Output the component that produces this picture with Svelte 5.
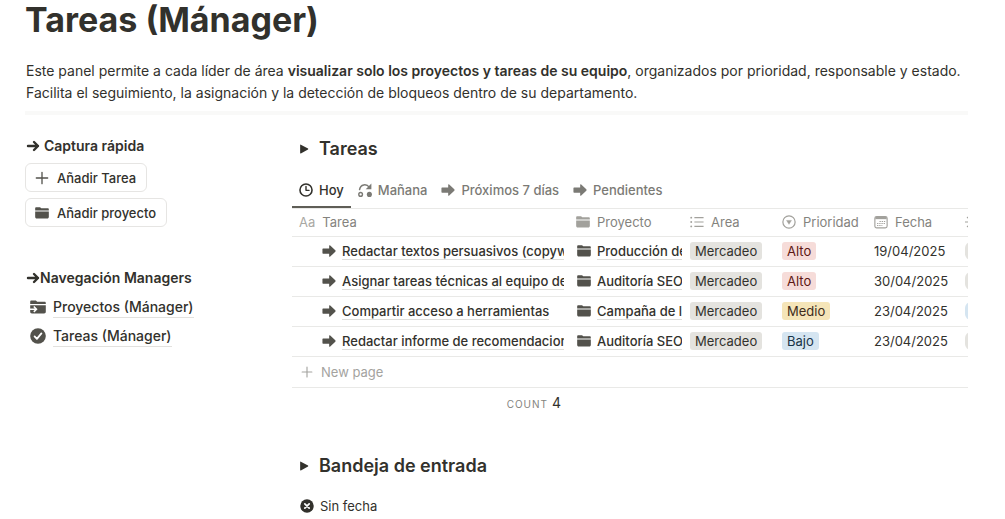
<script>
  const tabs = [
    { label: 'Hoy', icon: 'clock' },
    { label: 'Mañana', icon: 'skip' },
    { label: 'Próximos 7 días', icon: 'arrow' },
    { label: 'Pendientes', icon: 'arrow' }
  ];
  let active = $state(0);

  const rows = [
    { task: 'Redactar textos persuasivos (copywriting)', project: 'Producción de contenido', area: 'Mercadeo', priority: 'Alto', tone: 'red', date: '19/04/2025', state: 'gray' },
    { task: 'Asignar tareas técnicas al equipo de desarrollo', project: 'Auditoría SEO técnica', area: 'Mercadeo', priority: 'Alto', tone: 'red', date: '30/04/2025', state: 'gray' },
    { task: 'Compartir acceso a herramientas', project: 'Campaña de lanzamiento', area: 'Mercadeo', priority: 'Medio', tone: 'yellow', date: '23/04/2025', state: 'blue' },
    { task: 'Redactar informe de recomendaciones', project: 'Auditoría SEO técnica', area: 'Mercadeo', priority: 'Bajo', tone: 'blue', date: '23/04/2025', state: 'gray' }
  ];
</script>

{#snippet icon(name)}
  <svg class="icon" viewBox="0 0 16 16" fill="currentColor" aria-hidden="true">
    {#if name === 'arrow'}
      <path d="M1.200 5h7V2c0-.7.7-.9 1.200-.4l5.800 5.600c.5.5.5 1.100 0 1.600l-5.800 5.600c-.5.5-1.200.3-1.200-.4v-3h-7c-.4 0-.7-.3-.7-.7V5.700c0-.4.3-.7.7-.7z" />
    {:else if name === 'folder'}
      <path d="M.2 2.700c0-.7.500-1.200 1.200-1.200h3.900c.5 0 .8.100 1.100.4l.8.800h7.400c.7 0 1.200.500 1.200 1.200v1.100H.2z" />
      <path d="M.2 6.200h15.600v6.500c0 1-.7 1.700-1.700 1.700H1.900c-1 0-1.700-.7-1.700-1.700z" />
    {:else if name === 'folder-arrow'}
      <path d="M.2 2.700c0-.7.500-1.200 1.200-1.200h3.900c.5 0 .8.100 1.100.4l.8.800h7.400c.7 0 1.200.500 1.200 1.200v1.100H.2z" />
      <path d="M.2 6.200h15.600v6.500c0 1-.7 1.700-1.700 1.700H1.900c-1 0-1.700-.7-1.700-1.700z" />
      <path d="M0 10.200h6M3.800 7.500l2.700 2.700-2.700 2.700" fill="none" stroke="#fff" stroke-width="1.500" />
    {:else if name === 'plus'}
      <path d="M8 1.500v13M1.500 8h13" fill="none" stroke="currentColor" stroke-width="1.500" stroke-linecap="round" />
    {:else if name === 'check'}
      <circle cx="8" cy="8" r="7.800" />
      <path d="m4.600 8.400 2.300 2.400 4.500-5.400" fill="none" stroke="#fff" stroke-width="1.800" stroke-linecap="round" stroke-linejoin="round" />
    {:else if name === 'cross'}
      <circle cx="8" cy="8" r="7.700" />
      <path d="m5.500 5.500 5 5m0-5-5 5" fill="none" stroke="#fff" stroke-width="2" stroke-linecap="round" />
    {:else if name === 'clock'}
      <circle cx="8" cy="8" r="6.900" fill="none" stroke="currentColor" stroke-width="1.800" />
      <path d="M8 3.900v4.500h3.500" fill="none" stroke="currentColor" stroke-width="1.600" stroke-linecap="round" stroke-linejoin="round" />
    {:else if name === 'skip'}
      <circle cx="3" cy="13" r="2.100" fill="none" stroke="currentColor" stroke-width="1.600" />
      <circle cx="13" cy="13" r="2.900" />
      <path d="M1.800 7.500C2.800 1.400 9.700.4 13 5" fill="none" stroke="currentColor" stroke-width="1.700" stroke-linecap="round" />
      <path d="M15.300.7v6.500H8.800z" />
    {:else if name === 'list'}
      <circle cx="1.400" cy="3" r="1.100" /><circle cx="1.400" cy="8" r="1.100" /><circle cx="1.400" cy="13" r="1.100" />
      <path d="M5 3h10.500M5 8h10.500M5 13h10.500" fill="none" stroke="currentColor" stroke-width="1.300" />
    {:else if name === 'select'}
      <circle cx="8" cy="8" r="7" fill="none" stroke="currentColor" stroke-width="1.400" />
      <path d="M5.200 6.200h5.600L8 10.700z" stroke="currentColor" stroke-width=".5" stroke-linejoin="round" />
    {:else if name === 'calendar'}
      <rect x="1" y="1.700" width="14" height="13" rx="2" fill="none" stroke="currentColor" stroke-width="1.300" />
      <path d="M1.500 3.500h13" stroke="currentColor" stroke-width="2.500" />
      <path d="M6.300 7.500h6.500M3.500 9.700h9.300M3.500 12h6" stroke="currentColor" stroke-width="1.200" stroke-dasharray="1.500 1" />
    {:else if name === 'status'}
      <path d="M8 0v4M8 12v4M0 8h4M12 8h4M2.300 2.300l2.800 2.800M10.900 10.900l2.800 2.800M2.300 13.700l2.800-2.800M10.900 5.100l2.800-2.800" fill="none" stroke="currentColor" stroke-width="1.300" />
    {:else if name === 'toggle'}
      <path d="M3.600 3.500v9c0 .5.400.7.800.5l8.200-4.500c.4-.2.400-.8 0-1L4.400 3c-.4-.2-.8 0-.8.500z" />
    {/if}
  </svg>
{/snippet}

<main>
  <h1>Tareas (Mánager)</h1>
  <p class="intro">
    Este panel permite a cada líder de área <strong>visualizar solo los proyectos y tareas de su equipo</strong>, organizados por prioridad, responsable y estado. Facilita el seguimiento, la asignación y la detección de bloqueos dentro de su departamento.
  </p>
  <div class="rule"></div>

  <div class="columns">
    <aside>
      <section class="capture">
        <h3>
          <svg class="lead" viewBox="0 0 14 12" aria-hidden="true"><path d="M2 6h10M8 2l4 4-4 4" /></svg>
          Captura rápida
        </h3>
        <button class="action">{@render icon('plus')}Añadir Tarea</button>
        <button class="action">{@render icon('folder')}Añadir proyecto</button>
      </section>
      <nav>
        <h3 class="tight">
          <svg class="lead" viewBox="0 0 14 12" aria-hidden="true"><path d="M2 6h10M8 2l4 4-4 4" /></svg>
          Navegación Managers
        </h3>
        <a class="page" href="#proyectos">{@render icon('folder-arrow')}<span>Proyectos (Mánager)</span></a>
        <a class="page" href="#tareas">{@render icon('check')}<span>Tareas (Mánager)</span></a>
      </nav>
    </aside>

    <div class="content">
      <h2><button class="toggle" aria-label="Desplegar Tareas">{@render icon('toggle')}</button>Tareas</h2>
      <div class="tabs" role="tablist">
        {#each tabs as tab, i}
          <button role="tab" aria-selected={active === i} class:active={active === i} onclick={() => (active = i)}>
            {@render icon(tab.icon)}{tab.label}
          </button>
        {/each}
      </div>
      <div class="table-wrap">
        <table>
          <colgroup>
            <col class="c-task" /><col class="c-project" /><col class="c-std" /><col class="c-std" /><col class="c-std" /><col class="c-std" />
          </colgroup>
          <thead>
            <tr>
              <th><div class="head"><span class="aa">Aa</span>Tarea</div></th>
              <th><div class="head">{@render icon('folder')}Proyecto</div></th>
              <th><div class="head">{@render icon('list')}Area</div></th>
              <th><div class="head">{@render icon('select')}Prioridad</div></th>
              <th><div class="head">{@render icon('calendar')}Fecha</div></th>
              <th aria-label="Estado"><div class="head">{@render icon('status')}</div></th>
            </tr>
          </thead>
          <tbody>
            {#each rows as row}
              <tr>
                <td class="task"><div class="link">{@render icon('arrow')}<a href="#tarea">{row.task}</a></div></td>
                <td class="project"><div class="link">{@render icon('folder')}<a href="#proyecto">{row.project}</a></div></td>
                <td><span class="tag gray">{row.area}</span></td>
                <td><span class="tag {row.tone}">{row.priority}</span></td>
                <td>{row.date}</td>
                <td><span class="pill {row.state}"></span></td>
              </tr>
            {/each}
          </tbody>
        </table>
        <button class="new">{@render icon('plus')}New page</button>
        <div class="count"><span>COUNT</span> 4</div>
      </div>

      <h2 class="inbox"><button class="toggle" aria-label="Desplegar Bandeja de entrada">{@render icon('toggle')}</button>Bandeja de entrada</h2>
      <button class="view">{@render icon('cross')}Sin fecha</button>
    </div>
  </div>
</main>

<style>
  :global(body) {
    margin: 0;
    background: #fff;
    overflow: hidden;
  }
  main {
    padding: 0 37px 0 25px;
    color: #32312c;
    font: 14px/22px Inter, "Liberation Sans", sans-serif;
  }
  h1, h2, h3, p { margin: 0; }
  button {
    border: 0;
    padding: 0;
    background: none;
    color: inherit;
    font: inherit;
    cursor: pointer;
  }
  a { color: inherit; text-decoration: none; }
  .icon {
    display: block;
    flex: none;
    width: 14px;
    height: 14px;
  }
  h1 {
    font-size: 34px;
    line-height: 40px;
    font-weight: 700;
  }
  .intro { padding: 20px 0 0 1px; }
  .intro strong { font-weight: 600; }
  .rule {
    height: 4px;
    margin-top: 7px;
    background: #f9f9f8;
  }
  .columns {
    display: grid;
    grid-template-columns: 221px minmax(0, 1fr);
    column-gap: 46px;
    padding-top: 20px;
  }
  h3 {
    display: flex;
    align-items: center;
    gap: 4px;
    padding-left: 1px;
    font-size: 14px;
    line-height: 22px;
    font-weight: 600;
  }
  h3.tight { gap: 0; }
  .lead {
    width: 14px;
    height: 12px;
    fill: none;
    stroke: currentColor;
    stroke-width: 2.4;
    stroke-linecap: round;
    stroke-linejoin: round;
  }
  .capture {
    display: flex;
    flex-direction: column;
    align-items: flex-start;
    gap: 6px;
  }
  .action {
    display: flex;
    align-items: center;
    gap: 8px;
    height: 29px;
    padding: 0 10px 0 9px;
    border: 1px solid #e6e5e3;
    border-radius: 6px;
    font-size: 13px;
    font-weight: 450;
  }
  .action .icon, .link .icon { color: #53524c; }
  nav { padding-top: 40px; }
  .page {
    display: flex;
    align-items: center;
    gap: 7px;
    padding: 7px 0 0 5px;
    font-weight: 500;
  }
  .page .icon { width: 16px; height: 16px; color: #53524c; }
  .page span { border-bottom: 1px solid #e2e1de; line-height: 21px; }
  h2 {
    display: flex;
    align-items: center;
    gap: 8px;
    padding: 0 0 0 5px;
    font-size: 18px;
    line-height: 28px;
    font-weight: 600;
  }
  .tabs {
    display: flex;
    margin-top: 11px;
    border-bottom: 1px solid #e9e9e7;
  }
  .tabs button {
    display: flex;
    align-items: center;
    gap: 6px;
    height: 34px;
    padding: 0 7px 2px;
    color: #7b7a75;
    font-size: 13px;
    font-weight: 450;
    white-space: nowrap;
  }
  .tabs button.active {
    color: #32312c;
    box-shadow: inset 0 -2px #5f5e57;
  }
  .table-wrap { overflow: hidden; font-size: 13px; }
  table {
    width: 760px;
    table-layout: fixed;
    border-collapse: collapse;
  }
  .c-task { width: 276px; }
  .c-project { width: 116px; }
  .c-std { width: 92px; }
  th, td {
    box-sizing: border-box;
    height: 30px;
    padding: 0 0 0 6px;
    border-bottom: 1px solid #e9e9e7;
    text-align: left;
    white-space: nowrap;
  }
  th { height: 27px; color: #84837e; font-weight: 400; }
  .head { display: flex; align-items: center; gap: 7px; }
  .head .icon { color: #a2a19c; }
  .aa { color: #a9a8a4; }
  th:nth-child(1) { padding-left: 7px; }
  th:nth-child(2) { padding-left: 8px; }
  th:last-child, td:last-child { padding-left: 5px; }
  td.task { padding: 0 4px 0 30px; }
  td.project { padding: 0 2px 0 9px; }
  .link {
    display: flex;
    align-items: center;
    gap: 6px;
    overflow: hidden;
    font-weight: 450;
  }
  .link a { line-height: 16px; border-bottom: 1px solid #dededb; }
  .tag {
    display: block;
    width: fit-content;
    padding: 0 5px;
    border-radius: 3px;
    line-height: 18px;
  }
  .gray { background: #e4e3df; }
  .red { background: #f6dcd9; color: #5d1715; }
  .yellow { background: #f5e5b8; color: #402c1b; }
  .blue { background: #d5e5f1; color: #183347; }
  .pill {
    display: block;
    width: 60px;
    height: 18px;
    border-radius: 6px;
  }
  .new {
    display: flex;
    align-items: center;
    gap: 8px;
    width: 100%;
    height: 31px;
    padding-left: 9px;
    border-bottom: 1px solid #e9e9e7;
    color: #a4a39f;
  }
  .new .icon { width: 12px; }
  .count {
    width: 269px;
    padding-top: 4px;
    text-align: right;
    font-size: 14px;
  }
  .count span {
    color: #84837e;
    font-size: 10px;
    letter-spacing: 1px;
  }
  .inbox { padding-top: 37px; }
  .view {
    display: flex;
    align-items: center;
    gap: 6px;
    padding: 15px 0 0 8px;
    font-size: 13px;
  }
</style>
